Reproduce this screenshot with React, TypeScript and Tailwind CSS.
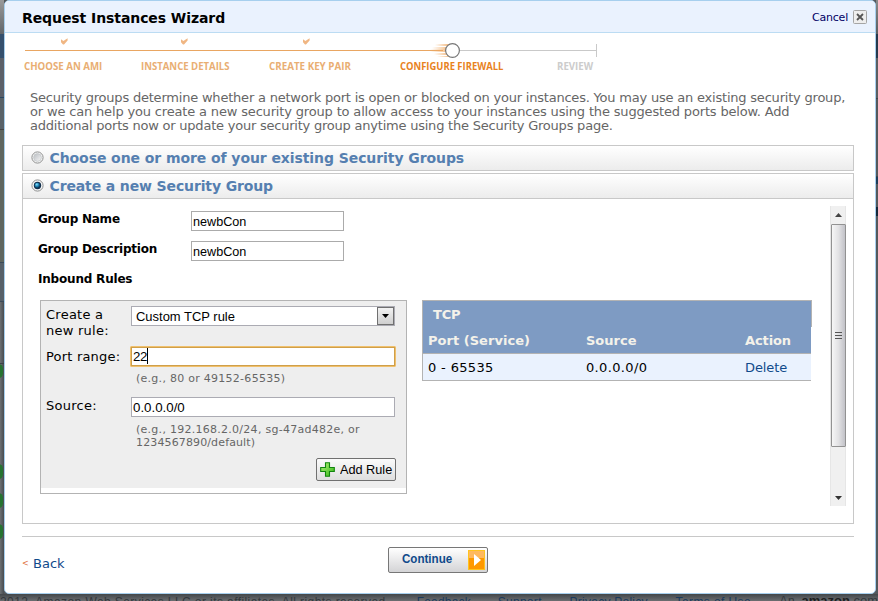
import React from "react";

const steps = [
  { label: "CHOOSE AN AMI", width: "w-[117px]", color: "text-[#e9ae73]", tick: true, pad: "pl-[36px]", scale: "scale-x-[0.88]" },
  { label: "INSTANCE DETAILS", width: "w-[128px]", color: "text-[#e9ae73]", tick: true, pad: "pl-[39px]", scale: "scale-x-[0.87]" },
  { label: "CREATE KEY PAIR", width: "w-[131px]", color: "text-[#e9ae73]", tick: true, pad: "pl-[33px]", scale: "scale-x-[0.89]" },
  { label: "CONFIGURE FIREWALL", width: "w-[157px]", color: "text-[#e8821e]", tick: false, pad: "", scale: "scale-x-[0.857]" },
  { label: "REVIEW", width: "w-[50px]", color: "text-[#cccccc]", tick: false, pad: "", scale: "scale-x-[0.88]" },
];

function Tick() {
  return (
    <svg width="9" height="8" viewBox="0 0 9 8" className="block">
      <path d="M1 1.2 L3.4 3 L7.6 0.2 L7.6 2.6 L4 6.6 L3 6.6 L1 4.2 Z" fill="#f0b683" />
    </svg>
  );
}

function Stepper() {
  return (
    <div className="h-[58px] pl-[19px]">
      <div className="flex h-[12px] pt-[5px]">
        {steps.map((s) => (
          <div key={s.label} className={`${s.width} ${s.pad} shrink-0`}>
            {s.tick && <Tick />}
          </div>
        ))}
      </div>
      <svg width="574" height="14" viewBox="0 0 574 14" className="block overflow-visible">
        <defs>
          <linearGradient id="trail" x1="0" x2="1" y1="0" y2="0">
            <stop offset="0" stopColor="#f0a860" stopOpacity="0" />
            <stop offset="1" stopColor="#f0a860" stopOpacity="0.8" />
          </linearGradient>
        </defs>
        <rect x="1" y="5" width="418" height="1" fill="#e9a662" />
        <rect x="435" y="5" width="138" height="1" fill="#c9c9c9" />
        <rect x="572" y="-1" width="1" height="13" fill="#c9c9c9" />
        <rect x="411" y="-1" width="14" height="2" fill="url(#trail)" />
        <rect x="408" y="2" width="17" height="2" fill="url(#trail)" />
        <rect x="406" y="4" width="18" height="3" fill="url(#trail)" />
        <rect x="410" y="8" width="15" height="2" fill="url(#trail)" />
        <rect x="413" y="11" width="13" height="1" fill="url(#trail)" />
        <circle cx="428.5" cy="5.5" r="6.9" fill="#fff" stroke="#777" strokeWidth="1.2" />
      </svg>
      <div className="flex font-['Open_Sans',sans-serif] text-[11px] font-bold leading-[13px]">
        {steps.map((s) => (
          <div key={s.label} className={`${s.width} ${s.color} shrink-0 whitespace-nowrap`}>
            <span className={`inline-block origin-left ${s.scale}`}>{s.label}</span>
          </div>
        ))}
      </div>
    </div>
  );
}

function Radio({ on }: { on?: boolean }) {
  return (
    <svg width="13" height="13" viewBox="0 0 13 13" className="mb-[2px] block">
      <defs>
        <radialGradient id="dot" cx="0.4" cy="0.35" r="0.7">
          <stop offset="0" stopColor="#8fe0fb" />
          <stop offset="0.5" stopColor="#1d86b8" />
          <stop offset="1" stopColor="#0b2d4c" />
        </radialGradient>
        <linearGradient id="off" x1="0" y1="0" x2="1" y2="1">
          <stop offset="0" stopColor="#b9bdc2" />
          <stop offset="1" stopColor="#f6f6f6" />
        </linearGradient>
      </defs>
      <circle cx="6.5" cy="6.5" r="5.6" fill="#f7f7f7" stroke="#8e8f8f" />
      {on ? (
        <>
          <circle cx="6.5" cy="6.5" r="3.7" fill="#122f4c" />
          <circle cx="6.3" cy="6.3" r="2.6" fill="url(#dot)" />
        </>
      ) : (
        <circle cx="6.5" cy="6.5" r="3.9" fill="url(#off)" stroke="#c3c6c9" strokeWidth="0.8" />
      )}
    </svg>
  );
}

function Field({ label, value }: { label: string; value: string }) {
  return (
    <div className="flex h-[30px]">
      <div className="w-[153px] text-[12px] font-bold leading-[16px] tracking-[-0.23px]">{label}</div>
      <div className="h-[20px] w-[153px] border border-[#ababab] bg-white pl-[1px] font-['Liberation_Sans',Arial,sans-serif] text-[13.3px] leading-[20px]">
        <span className="inline-block origin-left scale-x-[0.95]">{value}</span>
      </div>
    </div>
  );
}

function RuleForm() {
  return (
    <div className="h-[194px] w-[367px] border border-[#b3b3b3] bg-white">
      <div className="h-[187px] bg-[#eeeeee] pl-[5px] pt-[5px] text-[13px]">
        <div className="flex h-[40px]">
          <div className="w-[85px] pt-px leading-[16px] tracking-[0.25px]">
            Create a<br />new rule:
          </div>
          <div className="flex h-[20px] w-[264px] justify-between border border-[#ababb3] bg-white pl-[4px] font-['Liberation_Sans',Arial,sans-serif] text-[13.3px] leading-[19px]">
            <span className="origin-left scale-x-[0.975]">Custom TCP rule</span>
            <span className="flex h-[18px] w-[17px] items-center justify-center border border-[#707070] bg-gradient-to-b from-[#f2f2f2] to-[#cfcfcf]">
              <svg width="7" height="4" viewBox="0 0 7 4"><path d="M0 0H7L3.5 4Z" fill="#000" /></svg>
            </span>
          </div>
        </div>
        <div className="flex h-[51px]">
          <div className="w-[84px] pt-[3px] leading-[16px] tracking-[0.2px]">Port range:</div>
          <div>
            <div className="h-[21px] w-[266px] rounded-[1px] border border-[#f0c06c] bg-white">
              <div className="flex h-[19px] border border-[#cf9f4a] pl-px font-['Liberation_Sans',Arial,sans-serif] text-[13.3px] leading-[18px]">
                <span className="w-[14px] tracking-[-0.3px]">22</span>
                <span className="h-[16px] w-px bg-black" />
              </div>
            </div>
            <div className="pl-[6px] pt-[5px] text-[11px] leading-[13px] tracking-[0.27px] text-[#666]">(e.g., 80 or 49152-65535)</div>
          </div>
        </div>
        <div className="flex h-[61px]">
          <div className="w-[85px] pt-px leading-[16px] tracking-[0.25px]">Source:</div>
          <div>
            <div className="h-[20px] w-[264px] border border-[#ababb3] bg-white pl-[1px] font-['Liberation_Sans',Arial,sans-serif] text-[13.3px] leading-[19px]">
              <span className="inline-block origin-left">0.0.0.0/0</span>
            </div>
            <div className="whitespace-nowrap pl-[5px] pt-[6px] text-[11px] leading-[13px] tracking-[0.27px] text-[#666]">
              (e.g., 192.168.2.0/24, sg-47ad482e, or<br />
              <span className="tracking-[0.13px]">1234567890/default)</span>
            </div>
          </div>
        </div>
        <div className="ml-[270px] flex h-[23px] w-[80px] items-center rounded-[2px] border border-[#707070] bg-gradient-to-b from-[#fbfbfb] to-[#dedede] pl-[3px] font-['Liberation_Sans',Arial,sans-serif] text-[13.3px] leading-[22px]">
          <svg width="15" height="15" viewBox="0 0 15 15" className="mb-[1px] block shrink-0">
            <defs>
              <linearGradient id="plus" x1="0" y1="0" x2="1" y2="1">
                <stop offset="0" stopColor="#b7f57a" />
                <stop offset="1" stopColor="#2fb514" />
              </linearGradient>
            </defs>
            <path d="M5.5 0.7h4v4.8h4.8v4H9.5v4.8h-4V9.5H.7v-4h4.8Z" fill="url(#plus)" stroke="#11850d" strokeWidth="1.1" />
          </svg>
          <span className="ml-[5px] origin-left scale-x-[0.955] whitespace-nowrap">Add Rule</span>
        </div>
      </div>
    </div>
  );
}

function RuleTable() {
  return (
    <div className="ml-[15px] h-[81px] w-[390px] border-l border-t border-[#b3b3b3] text-[13px]">
      <div className="h-[26px] border-r border-[#b3b3b3] bg-[#7e9bc3] pl-[10px] font-bold leading-[27px] tracking-[-0.2px] text-[#f4f2ea]">TCP</div>
      <div className="mr-px flex h-[27px] border-b border-[#b3b3b3] bg-[#7e9bc3] pl-[5px] font-bold leading-[28px] text-[#f4f2ea]">
        <span className="w-[158px] tracking-[0.03px]">Port (Service)</span>
        <span className="w-[159px]">Source</span>
        <span className="tracking-[-0.1px]">Action</span>
      </div>
      <div className="mr-px flex h-[27px] border-b border-[#b3b3b3] bg-[#eaf2fe] pl-[5px] leading-[28px]">
        <span className="w-[158px] tracking-[0.35px]">0 - 65535</span>
        <span className="w-[159px] tracking-[0.35px]">0.0.0.0/0</span>
        <span className="tracking-[-0.1px] text-[#104a8b]">Delete</span>
      </div>
    </div>
  );
}

function ScrollBar() {
  return (
    <div className="flex h-[300px] w-[16px] flex-col items-center border-x border-[#e6e6e6] bg-[#f0f0f0]">
      <div className="flex h-[18px] items-center">
        <svg width="7" height="4" viewBox="0 0 7 4"><path d="M0 4H7L3.5 0Z" fill="#444" /></svg>
      </div>
      <div className="flex h-[223px] w-[15px] shrink-0 flex-col items-center justify-center gap-[2px] rounded-[1px] border border-[#929292] bg-gradient-to-r from-[#f6f6f6] via-[#e2e2e4] to-[#c2c2c8]">
        <i className="h-px w-[7px] bg-[#555]" />
        <i className="h-px w-[7px] bg-[#555]" />
        <i className="h-px w-[7px] bg-[#555]" />
      </div>
      <div className="flex grow items-end pb-[6px]">
        <svg width="7" height="4" viewBox="0 0 7 4"><path d="M0 0H7L3.5 4Z" fill="#333" /></svg>
      </div>
    </div>
  );
}

function PageEdge() {
  return (
    <div className="flex w-[4px] shrink-0 flex-col overflow-hidden bg-gradient-to-r from-[#6c7073] to-[#484c50]">
      <div className="h-[34px] shrink-0 bg-gradient-to-b from-[#9a9a9a] to-[#62666a]" />
      <div className="h-[24px] shrink-0 bg-[#35506e]" />
      <div className="h-[40px] shrink-0 border-b border-[#294661] bg-[#5b6069]" />
      <div className="h-[32px] shrink-0 border-b border-[#444] bg-[#596268]" />
      <div className="h-[132px] shrink-0 bg-[#5f665f]" />
      <div className="h-[40px] shrink-0 border-y border-[#3b4b59] bg-[#566069]" />
      <div className="h-[62px] shrink-0 border-b border-[#3c4348]" />
      <div className="-ml-[6px] h-[14px] w-[9px] shrink-0 rounded-full bg-[#257331]" />
      <div className="-ml-[6px] mt-[86px] h-[15px] w-[9px] shrink-0 rounded-full bg-[#257331]" />
      <div className="-ml-[6px] mt-[14px] h-[15px] w-[9px] shrink-0 rounded-full bg-[#257331]" />
      <div className="-ml-[6px] mt-[16px] h-[15px] w-[9px] shrink-0 rounded-full bg-[#257331]" />
    </div>
  );
}

function RightEdge() {
  return (
    <div className="flex w-[2px] shrink-0 flex-col bg-[#53585c]">
      <div className="h-[34px] bg-gradient-to-b from-[#8a8a8a] to-[#5a5d60]" />
      <div className="h-[24px] bg-[#26394c]" />
      <div className="h-[41px] border-b border-[#3f4447] bg-[#5a5e61]" />
      <div className="h-[78px] border-b border-[#3f4447]" />
      <div className="h-[7px] bg-[#1c3c58]" />
      <div className="mt-[23px] h-[9px] bg-[#14283a]" />
    </div>
  );
}

function Footer() {
  return (
    <div className="flex h-[7px] overflow-hidden whitespace-nowrap bg-gradient-to-b from-[#43474a] to-[#6b6e71] font-['Liberation_Sans',Arial,sans-serif] text-[12px] leading-[15px] text-[#33383c]">
      <span className="w-[417px] pt-px tracking-[0.41px]">2012, Amazon Web Services LLC or its affiliates. All rights reserved.</span>
      <span className="w-[81px] pt-px tracking-[0.2px] text-[#1b3a5c]">Feedback</span>
      <span className="w-[72px] pt-px tracking-[0.3px] text-[#1b3a5c]">Support</span>
      <span className="w-[106px] pt-px tracking-[0.25px] text-[#1b3a5c]">Privacy Policy</span>
      <span className="w-[104px] pt-px tracking-[0.4px] text-[#1b3a5c]">Terms of Use</span>
      <span className="w-[22px] tracking-[0.5px]">An</span>
      <span className="text-[13px] font-bold leading-[13px] text-[#1d1f21]">amazon</span>
      <span className="text-[13px] leading-[13px]">.com</span>
    </div>
  );
}

export default function App() {
  return (
    <div className="h-[601px] w-[878px] overflow-hidden bg-[#53585c] font-['DejaVu_Sans',Verdana,sans-serif] text-black">
      <div className="flex h-[594px]">
        <PageEdge />
        <div className="h-[594px] w-[872px] shrink-0 overflow-hidden rounded-[5px] border border-[#a6cfee] bg-white">
          <div className="flex h-[32px] items-center justify-between border-b border-[#bcdcf3] bg-[#eaf2fe] pl-[17px] pr-[8px]">
            <h1 className="pt-[3px] text-[14px] font-bold leading-[20px] tracking-[-0.08px]">Request Instances Wizard</h1>
            <div className="flex items-center gap-[5px]">
              <span className="pt-[2px] text-[11px] leading-[14px] tracking-[-0.2px] text-[#000066]">Cancel</span>
              <svg width="14" height="14" viewBox="0 0 14 14" className="block">
                <rect x="0.5" y="0.5" width="13" height="13" rx="1" fill="#eeeeee" stroke="#a5a5a5" />
                <path d="M4 4L10 10M10 4L4 10" stroke="#555" strokeWidth="1.8" />
              </svg>
            </div>
          </div>
          <Stepper />
          <p className="h-[54px] whitespace-nowrap pl-[25px] text-[13px] leading-[14px] tracking-[-0.206px] text-[#666]">
            Security groups determine whether a network port is open or blocked on your instances. You may use an existing security group,<br />
            <span className="tracking-[-0.164px]">or we can help you create a new security group to allow access to your instances using the suggested ports below. Add</span><br />
            <span className="tracking-[-0.222px]">additional ports now or update your security group anytime using the Security Groups page.</span>
          </p>
          <div className="ml-[17px] w-[832px]">
            <div className="mb-[2px] flex h-[26px] items-center gap-[5.5px] border border-[#c8c8c8] bg-gradient-to-b from-white to-[#ececec] pl-[8px] text-[14px] font-bold tracking-[-0.08px] text-[#557fb0]">
              <Radio />
              <span>Choose one or more of your existing Security Groups</span>
            </div>
            <div className="h-[351px] border border-[#c8c8c8]">
              <div className="flex h-[25px] items-center gap-[5.5px] border-b border-[#c8c8c8] bg-gradient-to-b from-white to-[#ececec] pl-[8px] text-[14px] font-bold tracking-[-0.13px] text-[#557fb0]">
                <Radio on />
                <span>Create a new Security Group</span>
              </div>
              <div className="flex justify-between pl-[15px] pr-[7px] pt-[7px]">
                <div className="pt-[5px]">
                  <Field label="Group Name" value="newbCon" />
                  <Field label="Group Description" value="newbCon" />
                  <div className="h-[29px] text-[12px] font-bold leading-[16px] tracking-[-0.2px]">Inbound Rules</div>
                  <div className="ml-[2px] flex">
                    <RuleForm />
                    <RuleTable />
                  </div>
                </div>
                <ScrollBar />
              </div>
            </div>
            <div className="mt-[12px] flex h-[38px] items-start border-t border-[#c8c8c8] pt-[10px]">
              <div className="flex w-[366px] pt-[9px] text-[13px] leading-[15px] text-[#104a8b]">
                <span className="w-[11px] text-[8px] leading-[16px] text-[#e0703a]">&lt;</span>
                <span>Back</span>
              </div>
              <div className="flex h-[26px] w-[100px] shrink-0 justify-between rounded-[2px] border border-[#777] bg-gradient-to-b from-white to-[#d4d4d6] pl-[13px] pr-[2px] font-['Liberation_Sans',Arial,sans-serif] text-[12px] font-bold leading-[23px] text-[#104a8b]">
                <span className="origin-left scale-x-[0.965]">Continue</span>
                <svg width="17" height="20" viewBox="0 0 17 20" className="mt-[2px] block">
                  <rect width="17" height="20" fill="#ffc31f" />
                  <rect x="1" y="1" width="15" height="8" fill="#ffb95e" />
                  <rect x="1" y="8" width="15" height="11" fill="#ff9900" />
                  <path d="M6 4L13 10L6 16Z" fill="#fff" />
                </svg>
              </div>
            </div>
          </div>
        </div>
        <RightEdge />
      </div>
      <Footer />
    </div>
  );
}
